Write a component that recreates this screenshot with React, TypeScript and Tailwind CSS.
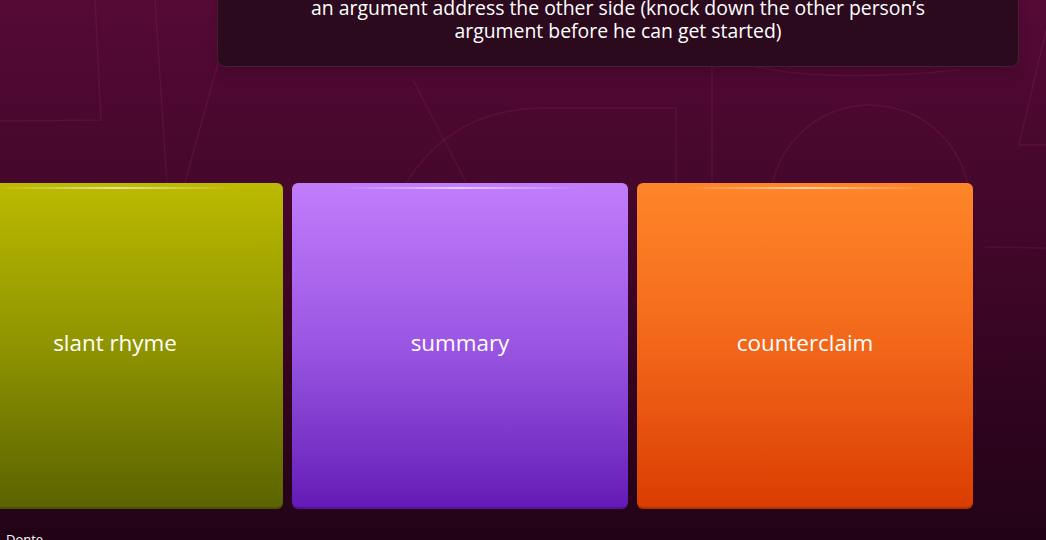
/**
 * Flashcard match screen
 * 定義カードの下に答え候補のタイルが並ぶ
 */
const tiles = [
  {
    label: "slant rhyme",
    className: "bg-gradient-to-b from-[#bcba00] via-[#8f9400] to-[#5a6300]",
  },
  {
    label: "summary",
    className: "bg-gradient-to-b from-[#c27dfc] via-[#9a55e2] to-[#6418b6]",
  },
  {
    label: "counterclaim",
    className: "bg-gradient-to-b from-[#ff8628] via-[#f2661a] to-[#da3c00]",
  },
];

function BackgroundShapes() {
  return (
    <svg
      className="pointer-events-none absolute inset-0 h-full w-full"
      viewBox="0 0 1046 540"
      fill="none"
      stroke="rgba(255,90,170,0.09)"
      strokeWidth="1.5"
    >
      {/* 左上の四角 */}
      <path d="M95 0 L101 120 L0 121" />
      <path d="M155 0 L170 230" />
      <path d="M230 20 L180 200" />
      {/* 中央のアーチ付き四角 */}
      <path d="M413 80 L470 190" />
      <path d="M405 185 Q450 110 540 108 L676 108 L676 183" />
      <path d="M712 0 L712 183" />
      {/* 円 */}
      <circle cx="870" cy="205" r="100" />
      <path d="M735 60 Q800 85 960 70" />
      {/* 右端の三角 */}
      <path d="M1046 30 L1019 145 L1046 145" />
      <path d="M985 247 L1046 248" />
    </svg>
  );
}

export default function App() {
  return (
    <main
      className="relative flex h-[540px] w-full flex-col overflow-hidden bg-gradient-to-b from-[#540a35] via-[#3f0628] to-[#220316] text-white"
      style={{ fontFamily: "'Open Sans', 'Noto Sans', sans-serif" }}
    >
      <BackgroundShapes />

      {/* 定義カード（上部は画面外） */}
      <div className="relative ml-[217px] mr-[27px] -mt-[52px] rounded-lg border border-[#4a1c36] bg-gradient-to-b from-[#2f0b20] to-[#2a0a1c] px-6 pb-6 pt-6 text-center text-[19.4px] leading-[23px] shadow-lg">
        <p>a claim made to rebut a previous claim; in</p>
        <p>an argument address the other side (knock down the other person’s</p>
        <p>argument before he can get started)</p>
      </div>

      {/* 答えのタイル */}
      <div className="relative -ml-[53px] mt-[116px] flex gap-[9px]">
        {tiles.map((t) => (
          <button
            key={t.label}
            className={`relative flex h-[326px] w-[336px] shrink-0 items-center justify-center rounded-md pb-[6px] shadow-[inset_0_-2px_0_rgba(0,0,0,0.18)] ${t.className}`}
          >
            <span className="absolute left-[14%] right-[14%] top-[4px] h-[2px] bg-gradient-to-r from-transparent via-white/60 to-transparent" />
            <span className="text-[22.4px] text-white">{t.label}</span>
          </button>
        ))}
      </div>

      {/* フッター */}
      <p className="relative ml-[6px] mt-[21px] text-[13px] text-white">Donte</p>
    </main>
  );
}
